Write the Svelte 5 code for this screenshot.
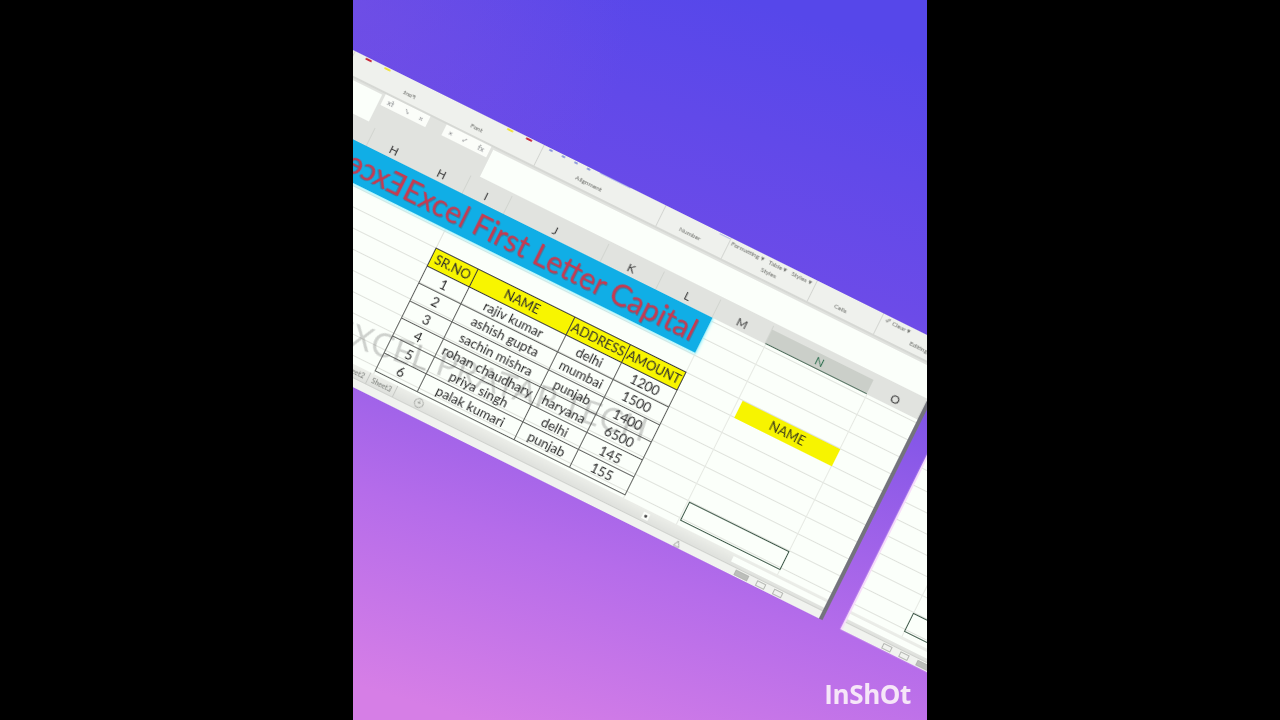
<script>
  const columns = ['H', 'I', 'J', 'K', 'L', 'M', 'N', 'O'];
  const rows = [
    ['1', 'rajiv kumar', 'delhi', '1200'],
    ['2', 'ashish gupta', 'mumbai', '1500'],
    ['3', 'sachin mishra', 'punjab', '1400'],
    ['4', 'rohan chaudhary', 'haryana', '6500'],
    ['5', 'priya singh', 'delhi', '145'],
    ['6', 'palak kumari', 'punjab', '155']
  ];
</script>

{#snippet workbook()}
  <div class="ribbon">
    <div class="group font">
      <div class="top"><i class="mark yellow"></i><i class="mark red"></i></div>
      <div class="label">Font</div>
    </div>
    <div class="group align">
      <div class="top"><i class="mark blue"></i><i class="mark blue"></i><i class="mark blue"></i><i class="mark blue"></i><i class="mark blue wide"></i></div>
      <div class="label">Alignment</div>
    </div>
    <div class="group number">
      <div class="top"><i class="mark blue short"></i></div>
      <div class="label">Number</div>
    </div>
    <div class="group styles">
      <div class="top"><span>Formatting ▾</span><span>Table ▾</span><span>Styles ▾</span></div>
      <div class="label">Styles</div>
    </div>
    <div class="group cells-g">
      <div class="top"></div>
      <div class="label">Cells</div>
    </div>
    <div class="group editing">
      <div class="top"><span>✐ Clear ▾</span></div>
      <div class="label">Editing</div>
    </div>
  </div>

  <div class="formula">
    <div class="fx-wrap">
      <div class="fx"><span>×</span><span>✓</span><span>fx</span></div>
    </div>
    <div class="bar"></div>
  </div>

  <div class="columns">
    {#each columns as c}
      <div class="col" class:selected={c === 'N'}>{c}</div>
    {/each}
  </div>

  <div class="cells">
    <div class="banner">Excel First Letter Capital</div>
    <div class="content">
      <table>
        <colgroup>
          <col class="c1" /><col class="c2" /><col class="c3" /><col class="c4" />
        </colgroup>
        <thead>
          <tr><th>SR.NO</th><th>NAME</th><th>ADDRESS</th><th>AMOUNT</th></tr>
        </thead>
        <tbody>
          {#each rows as row}
            <tr>{#each row as v}<td>{v}</td>{/each}</tr>
          {/each}
        </tbody>
      </table>
      <div class="side">
        <div class="name">NAME</div>
        <div class="box"></div>
      </div>
    </div>
    <div class="watermark">EXCEL PRATAP TECH</div>
  </div>

  <div class="tabs">
    <span class="tab first">Sheet2</span>
    <span class="tab">Sheet3</span>
    <span class="plus">+</span>
    <span class="thumb"></span>
    <span class="strip"></span>
  </div>
  <div class="status">
    <svg class="warn" viewBox="0 0 8 8" width="8" height="8"><path d="M4 1 7 7H1Z" fill="none" stroke="#a9aba7" /></svg>
    <i class="view on"></i><i class="view"></i><i class="view"></i>
  </div>
{/snippet}

<div class="page">
  <div class="stage">
    <div class="sheet">
      <div class="half flip">{@render workbook()}</div>
      <div class="half main">{@render workbook()}</div>
      <div class="gap"></div>
      <div class="half flip echo">{@render workbook()}</div>
    </div>
    <div class="logo">InShOt</div>
  </div>
</div>

<style>
  :global(body) {
    margin: 0;
    background: #000;
  }
  .page {
    width: 1280px;
    height: 720px;
    display: flex;
    justify-content: center;
    background: #000;
    overflow: hidden;
  }
  .stage {
    position: relative;
    width: 574px;
    height: 720px;
    overflow: hidden;
    background:
      radial-gradient(circle at 0 0, rgba(130, 85, 225, 0.4), rgba(130, 85, 225, 0) 280px),
      linear-gradient(197deg, #5647ea 6%, #6c4be8 36%, #8f5be8 54%, #b56cea 74%, #d67ee6 96%);
  }
  .sheet {
    position: absolute;
    left: -454px;
    top: 50px;
    display: flex;
    height: 302px;
    transform-origin: 454px 0;
    transform: rotate(26.4deg);
    filter: blur(0.5px);
    font-family: Lato, 'Open Sans', sans-serif;
    color: #2b2b2b;
  }
  .half {
    position: relative;
    width: 562px;
    height: 302px;
    flex: none;
    overflow: hidden;
    display: flex;
    flex-direction: column;
    background: #fbfffa;
  }
  .flip {
    transform: scaleX(-1);
  }
  .main {
    box-shadow: 4px 0 0 #73737c;
    z-index: 1;
  }
  .echo {
    box-shadow: 2px 0 1px #f6dcfa;
  }
  .gap {
    width: 26px;
    flex: none;
  }

  .ribbon {
    height: 23px;
    flex: none;
    display: flex;
    background: #eff1ed;
    border-bottom: 2px solid #d6d8d4;
  }
  .group {
    display: flex;
    flex-direction: column;
    font-size: 6.5px;
    color: #6b6d69;
    border-right: 1px solid #d4d6d2;
    box-sizing: border-box;
  }
  .top {
    height: 10px;
    flex: none;
    display: flex;
    align-items: center;
    white-space: nowrap;
  }
  .label {
    line-height: 10px;
    white-space: nowrap;
  }
  .font { width: 106px; }
  .font .label { padding-left: 31px; }
  .font .top { padding-left: 65px; gap: 14px; align-items: flex-start; }
  .align { width: 136px; }
  .align .label { padding-left: 42px; }
  .align .top { padding-left: 6px; gap: 10px; align-items: flex-start; }
  .number { width: 73px; }
  .number .label { padding-left: 22px; }
  .number .top { padding-left: 60px; align-items: flex-start; }
  .styles { width: 96px; }
  .styles .label { padding-left: 40px; }
  .styles .top { gap: 5px; padding-left: 2px; }
  .cells-g { width: 74px; }
  .cells-g .label { padding-left: 26px; }
  .editing { width: 77px; border-right: 0; }
  .editing .label { padding-left: 36px; }
  .editing .top { padding-left: 4px; }

  .mark {
    display: block;
    width: 7px;
    height: 2px;
    margin-top: 1px;
    flex: none;
    border-radius: 1px;
  }
  .yellow { background: #f1e23c; }
  .red { background: #c8273a; }
  .blue { background: #8d9adb; width: 4px; }
  .wide { width: 34px; height: 1px; margin-top: 0; background: #b7c0ea; }
  .short { width: 12px; height: 1px; background: #b7c0ea; }

  .formula {
    height: 35px;
    flex: none;
    display: flex;
    background: #e1e3df;
  }
  .fx-wrap {
    width: 62px;
    flex: none;
    padding: 0 3px 0 9px;
    box-sizing: border-box;
  }
  .fx {
    height: 12px;
    background: #fbfdf9;
    display: flex;
    justify-content: space-around;
    align-items: center;
    font-size: 8px;
    color: #85878a;
  }
  .bar {
    flex: 1;
    height: 30px;
    margin-top: 2px;
    background: #fbfffa;
  }

  .columns {
    height: 20px;
    flex: none;
    display: grid;
    grid-template-columns: 54px 46px 108px 62px 63px 59px 113px 57px;
    background: #e1e3df;
  }
  .col {
    display: flex;
    align-items: center;
    justify-content: center;
    font-size: 12px;
    line-height: 20px;
    color: #3e3e3e;
    border-right: 1px solid #d2d5d0;
    box-sizing: border-box;
    padding-top: 2px;
  }
  .col.selected {
    margin-top: 4px;
    height: 16px;
    padding-top: 0;
    background: #cbcfc9;
    color: #2f6f50;
    border-right: 0;
    border-bottom: 1.5px solid #4f6d5c;
  }

  .cells {
    position: relative;
    flex: 1;
    min-height: 0;
    overflow: hidden;
    background:
      linear-gradient(#e0e3dd, #e0e3dd) 54px 0 / 1px 100% no-repeat,
      linear-gradient(#e6e9e3, #e6e9e3) 333px 0 / 1px 100% no-repeat,
      linear-gradient(#e6e9e3, #e6e9e3) 392px 0 / 1px 100% no-repeat,
      linear-gradient(#e6e9e3, #e6e9e3) 505px 0 / 1px 100% no-repeat,
      linear-gradient(to bottom, transparent 18px, #dfe2dc 18px) 0 4px / 100% 19px #fbfffa;
  }
  .banner {
    width: 333px;
    height: 39px;
    box-sizing: border-box;
    background: #10aee6;
    box-shadow: 0 0 3px 1px #8cf2ff;
    font-size: 30.5px;
    line-height: 38px;
    color: #c8394f;
    text-shadow: 1px 1px 0 rgba(90, 90, 110, 0.55);
    white-space: nowrap;
  }
  .content {
    display: flex;
    margin-top: 21px;
    padding-left: 54px;
  }
  table {
    width: 279px;
    height: 130px;
    flex: none;
    table-layout: fixed;
    border-collapse: collapse;
    border: 1.5px solid #3c3c3c;
    font-size: 13.5px;
    text-align: center;
  }
  .c1 { width: 47px; }
  .c2 { width: 108px; }
  .c3 { width: 62px; }
  .c4 { width: 62px; }
  th, td {
    height: 18.5px;
    padding: 0;
    line-height: 16px;
    border: 1px solid #60625f;
    white-space: nowrap;
    overflow: hidden;
  }
  th {
    background: #f8f500;
    font-weight: 400;
    font-size: 13px;
    border-color: #3c3c3c;
  }
  td {
    background: transparent;
  }
  .side {
    margin-left: 60px;
    width: 112px;
    flex: none;
  }
  .name {
    margin-left: 3px;
    margin-top: 1px;
    height: 19px;
    line-height: 19px;
    background: #f7f400;
    text-align: center;
    font-size: 13px;
    color: #3a3a1a;
  }
  .box {
    margin-top: 95px;
    height: 21px;
    box-sizing: border-box;
    border: 1.5px solid #3f5a4a;
  }
  .watermark {
    position: absolute;
    left: -2px;
    top: 157px;
    transform-origin: 0 50%;
    transform: rotate(-8.3deg);
    font-size: 33px;
    letter-spacing: 0.8px;
    line-height: 40px;
    color: rgba(70, 70, 70, 0.25);
    white-space: nowrap;
  }

  .tabs {
    height: 12px;
    flex: none;
    display: flex;
    align-items: center;
    background: linear-gradient(#eceee9, #dfe1dd);
    font-size: 7px;
    color: #777a76;
  }
  .tab {
    width: 29px;
    line-height: 12px;
    text-align: center;
    border-right: 1px solid #c8cac6;
  }
  .first { margin-left: 22px; }
  .plus {
    margin-left: 21px;
    width: 8px;
    height: 8px;
    line-height: 7px;
    text-align: center;
    border: 1px solid #a9aba7;
    border-radius: 50%;
  }
  .thumb {
    margin-left: 245px;
    width: 7px;
    height: 7px;
    background: radial-gradient(circle, #444 1.2px, #fbfdf9 1.6px);
  }
  .strip {
    margin-left: 93px;
    width: 104px;
    height: 6px;
    background: #fbfffa;
  }
  .status {
    height: 9px;
    flex: none;
    display: flex;
    align-items: center;
    background: #f1f3ef;
    border-top: 1px solid #cfd1cd;
    box-sizing: border-box;
  }
  .warn {
    margin-left: 398px;
  }
  .view {
    display: block;
    width: 10px;
    height: 6px;
    margin-left: 9px;
    border: 1px solid #b4b6b2;
    box-sizing: border-box;
  }
  .view.on {
    margin-left: 60px;
    width: 15px;
    background: #bcbeba;
  }

  .logo {
    position: absolute;
    right: 16px;
    bottom: 11px;
    font-family: 'Open Sans', sans-serif;
    font-weight: 700;
    font-size: 26px;
    line-height: 30px;
    letter-spacing: -0.4px;
    color: #f6e6f8;
  }
</style>
